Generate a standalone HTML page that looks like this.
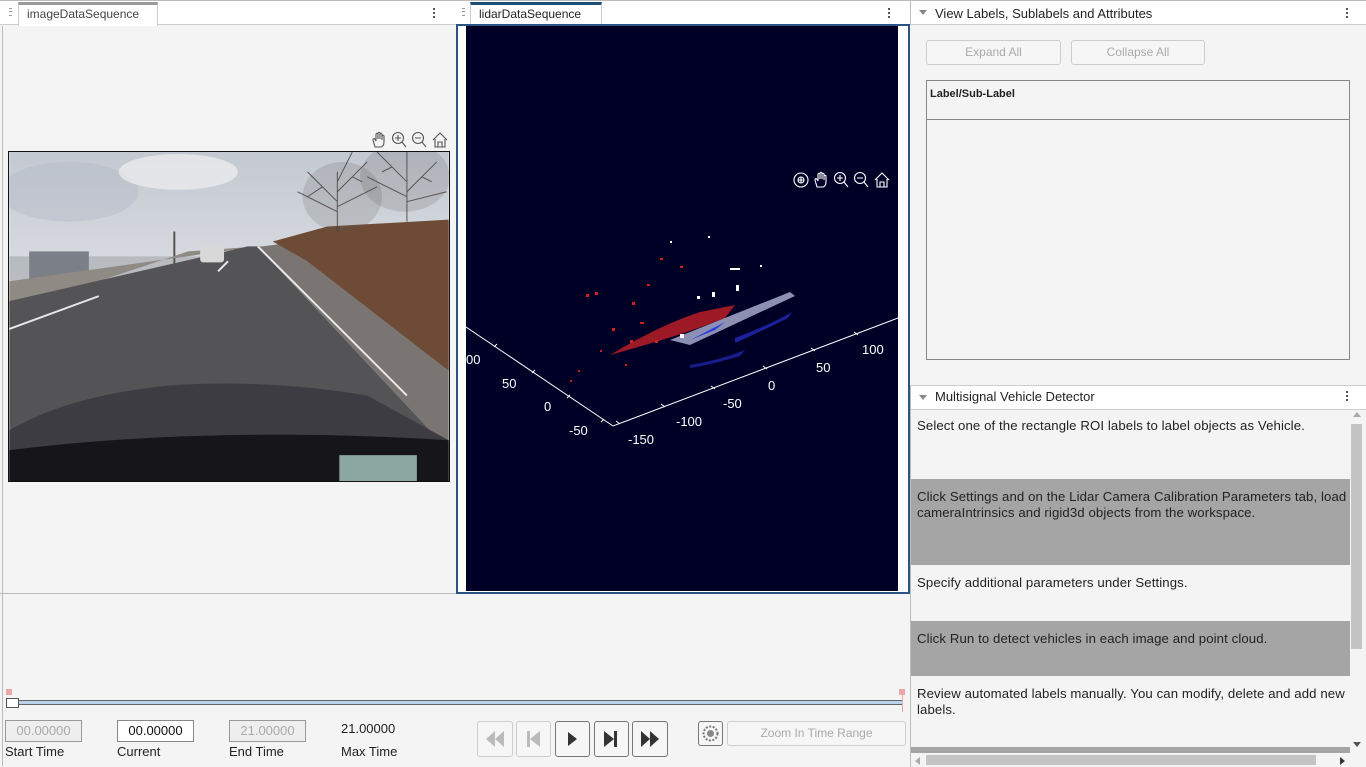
<!DOCTYPE html>
<html><head><meta charset="utf-8"><style>
*{box-sizing:border-box;margin:0;padding:0}
body{width:1366px;height:767px;overflow:hidden;background:#f4f4f4;font-family:"Liberation Sans",sans-serif;font-size:13px;color:#222;position:relative}
.a{position:absolute}
.tabbar{background:#fff;border-bottom:1px solid #ccc;height:25px}
.dots{position:absolute;width:3px}
.dots i{display:block;width:2px;height:2px;background:#555;margin-bottom:2px}
.tb{position:absolute;border:1px solid #999;border-radius:3px;background:#f6f6f6}
.inp{position:absolute;height:22px;width:77px;border:1px solid #888;font-size:13px;text-align:center;line-height:20px}
.lbl{position:absolute;font-size:13px}
.step{position:absolute;left:917px;font-size:13.2px;letter-spacing:0.1px;line-height:16px;color:#222}
</style></head><body>

<div class="a tabbar" style="left:0;top:0;width:456px;height:25px;border-top:1px solid #bbb"></div>
<div class="a" style="left:18px;top:2px;width:140px;height:24px;background:#fff;border:1px solid #ccc;border-bottom:none;border-top:3px solid #9a9a9a"></div>
<div class="a" style="left:27px;top:7px;font-size:12px;color:#444">imageDataSequence</div>
<div class="a" style="left:9px;top:8px;width:3px;height:8px;border-top:1px solid #999;border-bottom:1px solid #999"><div style="margin-top:2px;height:1px;background:#999"></div></div>
<div class="dots" style="left:433px;top:8px"><i></i><i></i><i></i></div>
<div class="a" style="left:2px;top:26px;width:1px;height:740px;background:#bbb"></div>

<svg class="a" style="left:370px;top:131px" width="80" height="18" viewBox="0 0 80 18" fill="none" stroke="#555" stroke-width="1.1">
<path d="M5 16 L3 9 Q3 7 5 8 L6 10 V3 Q7 1.5 8 3 V8 V2 Q9 0.5 10 2 V8 V3 Q11 1.5 12 3 V9 V5 Q13 3.5 14 5 V11 Q14 15 11 16 Z"/>
<circle cx="28" cy="7" r="5.5"/><path d="M32 11 L36 16 M25 7 H31 M28 4 V10"/>
<circle cx="48" cy="7" r="5.5"/><path d="M52 11 L56 16 M45 7 H51"/>
<path d="M63 9 L70 2 L77 9 M65 8 V16 H75 V8 M68 16 V11 H72 V16"/>
</svg>

<svg class="a" style="left:8px;top:151px;border:1px solid #111" width="442" height="331" viewBox="0 0 442 331">
<defs><linearGradient id="sky" x1="0" y1="0" x2="0" y2="1"><stop offset="0" stop-color="#c3c9d2"/><stop offset=".5" stop-color="#e1e2e5"/><stop offset="1" stop-color="#cfd2d6"/></linearGradient></defs>
<rect width="442" height="331" fill="url(#sky)"/>
<ellipse cx="60" cy="40" rx="70" ry="30" fill="#b5bcc7" opacity=".5"/>
<ellipse cx="170" cy="20" rx="60" ry="18" fill="#f0f0f0" opacity=".7"/>
<rect x="0" y="105" width="250" height="40" fill="#8a8c90" opacity=".4"/>
<rect x="20" y="100" width="60" height="30" fill="#7b8088"/>
<rect x="165" y="80" width="2" height="60" fill="#555"/>
<path d="M0 160 L180 100 L250 95 L0 130 Z" fill="#8f8a84"/>
<path d="M0 150 L240 95 L250 95 L442 300 L442 331 L0 331 Z" fill="#545457"/>
<path d="M255 95 L442 70 L442 300 L250 95 Z" fill="#7a7572"/>
<path d="M265 90 L320 75 L442 68 L442 220 L300 110 Z" fill="#6d4b37"/>
<path d="M0 178 L90 145 M210 120 L220 110 M250 95 L400 245" stroke="#e8e8e8" stroke-width="2" fill="none"/>
<g stroke="#3a3430" stroke-width="1" fill="none" opacity=".8">
<path d="M330 80 L330 20 M330 50 L300 20 M330 40 L360 10 M330 60 L290 40 M330 30 L345 0 M330 55 L370 35 M315 35 L300 45 M345 25 L355 30"/>
<path d="M400 70 L400 0 M400 40 L430 10 M400 30 L370 0 M400 50 L440 40 M400 45 L360 25 M415 25 L425 30 M385 15 L375 20"/>
</g>
<ellipse cx="335" cy="45" rx="40" ry="35" fill="#5a5250" opacity=".18"/>
<ellipse cx="398" cy="25" rx="45" ry="35" fill="#5a5250" opacity=".18"/>
<rect x="192" y="95" width="24" height="16" rx="3" fill="#d8d8d8"/>
<path d="M0 331 L0 280 Q60 245 160 235 Q260 228 360 245 L442 290 L442 331 Z" fill="#3d3c42"/>
<path d="M0 331 L0 300 Q200 275 442 290 L442 331 Z" fill="#16161a"/>
<rect x="332" y="305" width="78" height="26" fill="#8aa8a0"/>
</svg>

<div class="a" style="left:0;top:593px;width:457px;height:1px;background:#bbb"></div>

<div class="a tabbar" style="left:456px;top:0;width:454px;height:25px;border-top:1px solid #bbb"></div>
<div class="a" style="left:470px;top:2px;width:132px;height:24px;background:#fff;border:1px solid #ccc;border-bottom:none;border-top:3px solid #1f4e79"></div>
<div class="a" style="left:479px;top:7px;font-size:12px;color:#222">lidarDataSequence</div>
<div class="a" style="left:462px;top:8px;width:3px;height:8px;border-top:1px solid #999;border-bottom:1px solid #999"><div style="margin-top:2px;height:1px;background:#999"></div></div>
<div class="dots" style="left:888px;top:8px"><i></i><i></i><i></i></div>

<div class="a" style="left:456px;top:24px;width:454px;height:570px;border:2px solid #285486;background:#fff"></div>
<svg class="a" style="left:466px;top:26px" width="432" height="565" viewBox="466 26 432 565">
<rect x="466" y="26" width="432" height="565" fill="#000026"/>
<g stroke="#fff" stroke-width="1" fill="none">
<path d="M466 327 L613 426 L898 318"/>
<path d="M497 344 L494 347 M535 370 L532 373 M570 395 L567 398 M604 419 L601 422"/>
<path d="M620 424 L616 421 M665 407 L661 404 M715 389 L711 386 M767 369 L763 366 M815 351 L811 348 M858 335 L854 332"/>
</g>
<g fill="#fff" font-size="13" font-family="Liberation Sans,sans-serif">
<text x="466" y="364">00</text><text x="502" y="388">50</text><text x="544" y="411">0</text><text x="569" y="435">-50</text>
<text x="628" y="444">-150</text><text x="676" y="426">-100</text><text x="723" y="408">-50</text><text x="768" y="390">0</text><text x="816" y="372">50</text><text x="862" y="354">100</text>
</g>
<g>
<path d="M610 355 Q660 325 700 312 L735 305 L725 318 Q690 332 645 345 Z" fill="#d02226" opacity=".75"/>
<path d="M670 340 L790 292 L795 296 L690 345 Z" fill="#c8cdf0" opacity=".7"/>
<path d="M690 340 L715 330 L725 322 L700 335 Z" fill="#2a3adf"/>
<path d="M735 338 Q770 325 792 312 L788 318 Q760 332 735 343 Z" fill="#2a2ed0" opacity=".7"/>
<path d="M690 365 Q720 360 745 350 L740 356 Q710 365 690 368 Z" fill="#2a2ed0" opacity=".6"/>
<g fill="#d02020">
<rect x="586" y="294" width="3" height="3"/><rect x="595" y="292" width="3" height="3"/><rect x="632" y="302" width="3" height="3"/><rect x="640" y="322" width="4" height="2"/><rect x="612" y="328" width="3" height="3"/><rect x="630" y="340" width="3" height="3"/><rect x="660" y="258" width="3" height="2"/><rect x="680" y="266" width="3" height="2"/><rect x="647" y="284" width="3" height="2"/><rect x="578" y="370" width="2" height="2"/><rect x="625" y="364" width="2" height="2"/><rect x="655" y="340" width="3" height="3"/><rect x="600" y="350" width="2" height="2"/><rect x="570" y="380" width="2" height="2"/>
</g>
<g fill="#fff">
<rect x="670" y="241" width="2" height="2"/><rect x="708" y="236" width="2" height="2"/><rect x="730" y="268" width="10" height="2"/><rect x="712" y="292" width="3" height="5"/><rect x="736" y="285" width="3" height="6"/><rect x="760" y="265" width="2" height="2"/><rect x="697" y="296" width="3" height="3"/><rect x="680" y="334" width="4" height="4"/>
</g>
</g>
</svg>
<svg class="a" style="left:792px;top:171px" width="100" height="18" viewBox="0 0 100 18" fill="none" stroke="#fff" stroke-width="1.1">
<circle cx="9" cy="9" r="7"/><circle cx="9" cy="9" r="3"/><path d="M9 6 V12 M6 9 H12"/>
<path d="M25 16 L23 9 Q23 7 25 8 L26 10 V3 Q27 1.5 28 3 V8 V2 Q29 0.5 30 2 V8 V3 Q31 1.5 32 3 V9 V5 Q33 3.5 34 5 V11 Q34 15 31 16 Z"/>
<circle cx="48" cy="7" r="5.5"/><path d="M52 11 L56 16 M45 7 H51 M48 4 V10"/>
<circle cx="68" cy="7" r="5.5"/><path d="M72 11 L76 16 M65 7 H71"/>
<path d="M83 9 L90 2 L97 9 M85 8 V16 H95 V8 M88 16 V11 H92 V16"/>
</svg>

<div class="a" style="left:910px;top:0;width:456px;height:25px;background:#fff;border-bottom:1px solid #ccc;border-top:1px solid #bbb;border-left:1px solid #bbb"></div>
<div class="a" style="left:919px;top:10px;width:0;height:0;border-left:4px solid transparent;border-right:4px solid transparent;border-top:5px solid #888"></div>
<div class="a" style="left:935px;top:6px;font-size:13px">View Labels, Sublabels and Attributes</div>
<div class="dots" style="left:1346px;top:8px"><i></i><i></i><i></i></div>
<div class="tb" style="left:926px;top:40px;width:135px;height:25px;color:#aaa;text-align:center;line-height:23px;font-size:12px;border-color:#ccc">Expand All</div>
<div class="tb" style="left:1071px;top:40px;width:134px;height:25px;color:#aaa;text-align:center;line-height:23px;font-size:12px;border-color:#ccc">Collapse All</div>
<div class="a" style="left:926px;top:80px;width:424px;height:280px;border:1px solid #888"></div>
<div class="a" style="left:926px;top:119px;width:424px;height:1px;background:#888"></div>
<div class="a" style="left:930px;top:88px;font-size:11px;font-weight:bold">Label/Sub-Label</div>

<div class="a" style="left:910px;top:385px;width:456px;height:25px;background:#fff;border-bottom:1px solid #ccc;border-top:1px solid #ccc;border-left:1px solid #bbb"></div>
<div class="a" style="left:919px;top:395px;width:0;height:0;border-left:4px solid transparent;border-right:4px solid transparent;border-top:5px solid #888"></div>
<div class="a" style="left:935px;top:389px;font-size:13px">Multisignal Vehicle Detector</div>
<div class="dots" style="left:1346px;top:391px"><i></i><i></i><i></i></div>
<div class="a" style="left:910px;top:410px;width:1px;height:357px;background:#bbb"></div>
<div class="a" style="left:911px;top:479px;width:439px;height:86px;background:#a5a5a5"></div>
<div class="a" style="left:911px;top:621px;width:439px;height:55px;background:#a5a5a5"></div>
<div class="a" style="left:911px;top:747px;width:439px;height:6px;background:#a5a5a5"></div>
<div class="step" style="top:418px">Select one of the rectangle ROI labels to label objects as Vehicle.</div>
<div class="step" style="top:489px;white-space:nowrap;width:433px;overflow:hidden">Click Settings and on the Lidar Camera Calibration Parameters tab, load t<br>cameraIntrinsics and rigid3d objects from the workspace.</div>
<div class="step" style="top:575px">Specify additional parameters under Settings.</div>
<div class="step" style="top:631px">Click Run to detect vehicles in each image and point cloud.</div>
<div class="step" style="top:686px">Review automated labels manually. You can modify, delete and add new<br>labels.</div>
<div class="a" style="left:1351px;top:424px;width:11px;height:225px;background:#c4c4c4"></div>
<div class="a" style="left:1353px;top:412px;width:0;height:0;border-left:4px solid transparent;border-right:4px solid transparent;border-bottom:5px solid #aaa"></div>
<div class="a" style="left:1353px;top:742px;width:0;height:0;border-left:4px solid transparent;border-right:4px solid transparent;border-top:5px solid #555"></div>
<div class="a" style="left:926px;top:755px;width:390px;height:10px;background:#c4c4c4"></div>
<div class="a" style="left:915px;top:757px;width:0;height:0;border-top:4px solid transparent;border-bottom:4px solid transparent;border-right:5px solid #aaa"></div>
<div class="a" style="left:1340px;top:757px;width:0;height:0;border-top:4px solid transparent;border-bottom:4px solid transparent;border-left:5px solid #333"></div>

<div class="a" style="left:6px;top:689px;width:6px;height:6px;background:#e8a8a8"></div>
<div class="a" style="left:899px;top:689px;width:6px;height:6px;background:#e8a8a8"></div>
<div class="a" style="left:902px;top:694px;width:1px;height:18px;background:#e8a8a8"></div>
<div class="a" style="left:8px;top:700px;width:894px;height:5px;background:#b9d3ea;border-top:1px solid #666;border-bottom:1px solid #666"></div>
<div class="a" style="left:6px;top:698px;width:13px;height:10px;background:#fff;border:1px solid #555"></div>

<div class="inp" style="left:5px;top:720px;color:#aaa;background:#eee;border-color:#999">00.00000</div>
<div class="inp" style="left:117px;top:720px;background:#fff;color:#111">00.00000</div>
<div class="inp" style="left:229px;top:720px;color:#aaa;background:#eee;border-color:#999">21.00000</div>
<div class="lbl" style="left:341px;top:721px">21.00000</div>
<div class="lbl" style="left:5px;top:744px">Start Time</div>
<div class="lbl" style="left:117px;top:744px">Current</div>
<div class="lbl" style="left:229px;top:744px">End Time</div>
<div class="lbl" style="left:341px;top:744px">Max Time</div>

<div class="tb" style="left:477px;top:721px;width:36px;height:36px;border-color:#ccc"></div>
<div class="tb" style="left:516px;top:721px;width:35px;height:36px;border-color:#ccc"></div>
<div class="tb" style="left:555px;top:721px;width:35px;height:36px;border-color:#777"></div>
<div class="tb" style="left:594px;top:721px;width:35px;height:36px;border-color:#777"></div>
<div class="tb" style="left:632px;top:721px;width:36px;height:36px;border-color:#777"></div>
<svg class="a" style="left:477px;top:721px" width="192" height="36" viewBox="0 0 192 36">
<path d="M18 10 L9 18 L18 26 Z M27 10 L18 18 L27 26 Z" fill="#bbb"/>
<rect x="50" y="10" width="3" height="16" fill="#bbb"/><path d="M63 10 L53 18 L63 26 Z" fill="#bbb"/>
<path d="M91 11 L100 18 L91 25 Z" fill="#333"/>
<path d="M127 10 L137 18 L127 26 Z" fill="#333"/><rect x="137" y="10" width="3" height="16" fill="#333"/>
<path d="M164 10 L173 18 L164 26 Z M173 10 L182 18 L173 26 Z" fill="#333"/>
</svg>
<div class="tb" style="left:698px;top:721px;width:25px;height:25px;border-color:#777"></div>
<svg class="a" style="left:701px;top:724px" width="19" height="19" viewBox="0 0 19 19"><circle cx="9.5" cy="9.5" r="7" fill="none" stroke="#777" stroke-width="2" stroke-dasharray="2 1.5"/><circle cx="9.5" cy="9.5" r="3.5" fill="#888"/></svg>
<div class="tb" style="left:727px;top:721px;width:179px;height:25px;border-color:#ccc;color:#aaa;text-align:center;line-height:23px;font-size:12px">Zoom In Time Range</div>
</body></html>
